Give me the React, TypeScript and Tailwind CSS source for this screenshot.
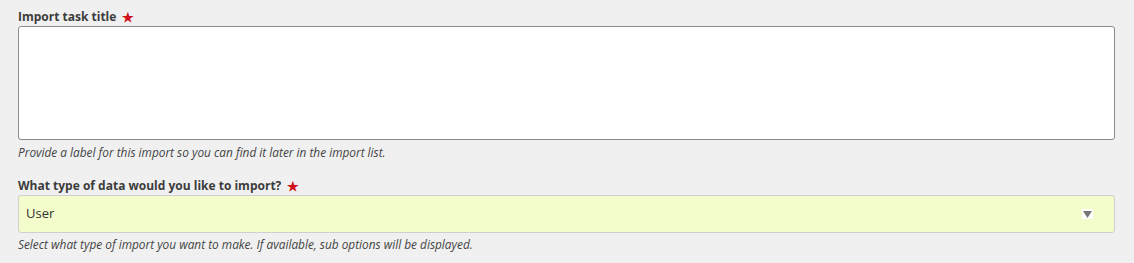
import React from "react";

export default function App() {
  return (
    <div className="w-[1134px] h-[263px] bg-[#f0f0f0] pl-[18px] pr-[19px] pt-[9px] font-['Open_Sans','Noto_Sans',sans-serif] text-[#3c3c3c]">
      <div className="flex items-center h-[16px] text-[12px] font-bold">
        <span>Import task title</span>
        <span className="ml-[6px] text-[#d0101b] text-[13px] leading-none">★</span>
      </div>
      <textarea className="block mt-[1px] w-full h-[114px] bg-white border border-[#8c8c8c] rounded-[3px] resize-none outline-none" />
      <p className="mt-[5px] h-[14px] text-[11.85px] italic leading-[14px] text-[#444]">
        Provide a label for this import so you can find it later in the import list.
      </p>
      <div className="mt-[19px] flex items-center h-[16px] text-[12px] font-bold">
        <span>What type of data would you like to import?</span>
        <span className="ml-[6px] text-[#d0101b] text-[13px] leading-none">★</span>
      </div>
      <div className="mt-[1px] flex items-center justify-between h-[38px] bg-[#f3fccb] border border-[#cfcfcf] rounded-[3px] pl-[7px] pr-[21px] text-[13px] text-[#333]">
        <span>User</span>
        <span className="flex items-center justify-center w-[11px] h-[10px] bg-white">
          <svg width="9" height="7" viewBox="0 0 9 7">
            <polygon points="0,0 9,0 4.5,7" fill="#777" />
          </svg>
        </span>
      </div>
      <p className="mt-[4px] h-[14px] text-[11.85px] italic leading-[14px] text-[#444]">
        Select what type of import you want to make. If available, sub options will be displayed.
      </p>
    </div>
  );
}
